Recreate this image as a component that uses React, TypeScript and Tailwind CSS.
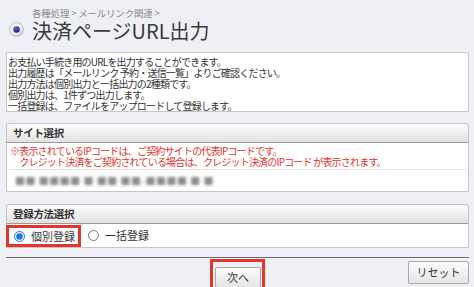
import React from "react";

const jp = "font-['Noto_Sans_CJK_JP','Noto_Sans',sans-serif]";

const SectionHeader = ({ title }: { title: string }) => (
  <div className="h-[20px] flex items-center pl-[6px] rounded-t-[3px] border border-[#c4c4c4] border-b-[#9a9a9a] bg-gradient-to-b from-[#fdfdfd] to-[#e2e2e2]">
    <span className="text-[10.5px] font-bold text-[#333] leading-none tracking-[-0.3px]">{title}</span>
  </div>
);

const TitleIcon = () => (
  <svg width="15" height="15" viewBox="0 0 15 15">
    <defs>
      <radialGradient id="ring" cx="40%" cy="35%" r="70%">
        <stop offset="0%" stopColor="#ffffff" />
        <stop offset="70%" stopColor="#e6e6ee" />
        <stop offset="100%" stopColor="#b9bbc8" />
      </radialGradient>
      <radialGradient id="dot" cx="40%" cy="35%" r="70%">
        <stop offset="0%" stopColor="#5a66c8" />
        <stop offset="100%" stopColor="#141c6e" />
      </radialGradient>
    </defs>
    <circle cx="7.5" cy="7.5" r="7" fill="url(#ring)" stroke="#b4b6c2" strokeWidth="0.8" />
    <circle cx="7.5" cy="7.5" r="3.2" fill="url(#dot)" />
  </svg>
);

export default function App() {
  return (
    <div className={`w-[474px] h-[287px] overflow-hidden bg-[#eff0f5] pl-[6px] pr-[5px] ${jp}`}>
      {/* page title */}
      <div className="flex items-end pt-[7px] mb-[10px]">
        <div className="ml-[3px] mr-[8px] mb-[5px]">
          <TitleIcon />
        </div>
        <div>
          <div className="text-[9.5px] leading-[12px] mb-[1px] text-[#8a8a8a] tracking-[-0.2px] whitespace-pre">各種処理 &gt; メールリンク関連 &gt;</div>
          <div className="text-[20px] leading-[22px] text-[#3a3a3a]">決済ページURL出力</div>
        </div>
      </div>

      {/* info */}
      <div className="bg-white border border-[#c8c8c8] px-[1px] pt-[3px] text-[10px] leading-[11px] text-[#333] tracking-[-0.8px]">
        <p>お支払い手続き用のURLを出力することができます。</p>
        <p>出力履歴は「メールリンク 予約・送信一覧」よりご確認ください。</p>
        <p>出力方法は個別出力と一括出力の2種類です。</p>
        <p>個別出力は、1件ずつ出力します。</p>
        <p>一括登録は、ファイルをアップロードして登録します。</p>
      </div>

      {/* site */}
      <div className="mt-[11px]">
        <SectionHeader title="サイト選択" />
        <div className="bg-white border border-t-0 border-[#c8c8c8]">
          <div className="px-[3px] pt-[2px] pb-[2px] text-[10px] leading-[11px] text-[#e0352b] tracking-[-0.8px]">
            <p>※表示されているIPコードは、ご契約サイトの代表IPコードです。</p>
            <p>　クレジット決済をご契約されている場合は、クレジット決済のIPコード が表示されます。</p>
          </div>
          <div className="mx-[2px] border-t border-dotted border-[#c8c8c8]" />
          <div className="h-[21px] flex items-center pl-[8px]">
            <span className="text-[10px] text-[#8a8a8a] blur-[1.4px] tracking-[0.5px]">■■ ■■■■ ■ ■■ ■■-■■■■ ■ ■</span>
          </div>
        </div>
      </div>

      {/* register method */}
      <div className="mt-[12px]">
        <SectionHeader title="登録方法選択" />
        <div className="h-[24px] bg-white border border-t-0 border-[#c8c8c8] flex items-end">
          <label className="flex items-center h-[22px] w-[75px] -ml-[1px] border-[3px] border-[#e5352a] pl-[5px] gap-[6px]">
            <input type="radio" name="method" defaultChecked className="m-0 w-[11px] h-[11px] accent-[#1a73e8]" />
            <span className="text-[11px] text-[#333] leading-none">個別登録</span>
          </label>
          <label className="flex items-center h-[22px] ml-[7px] gap-[6px] pb-[2px]">
            <input type="radio" name="method" className="m-0 w-[11px] h-[11px]" />
            <span className="text-[11px] text-[#333] leading-none">一括登録</span>
          </label>
        </div>
      </div>

      {/* separator */}
      <div className="mt-[9px] border-t border-[#6b6b6b] border-b border-b-white" />

      {/* buttons */}
      <div className="grid grid-cols-[1fr_auto_1fr] items-start">
        <div />
        <div className="border-[3px] border-[#e5352a] pl-[2px] pr-[1px] pt-[1px] pb-[3px]">
          <button className="w-[46px] h-[21px] rounded-[2px] border border-[#a8a8a8] bg-gradient-to-b from-[#fbfbfb] to-[#e6e6e6] text-[11px] text-[#333] leading-none">
            次へ
          </button>
        </div>
        <div className="flex justify-end pt-[2px]">
          <button className="w-[61px] h-[23px] rounded-[2px] border border-[#a8a8a8] bg-gradient-to-b from-[#fbfbfb] to-[#e6e6e6] text-[11px] text-[#333] leading-none">
            リセット
          </button>
        </div>
      </div>
    </div>
  );
}
